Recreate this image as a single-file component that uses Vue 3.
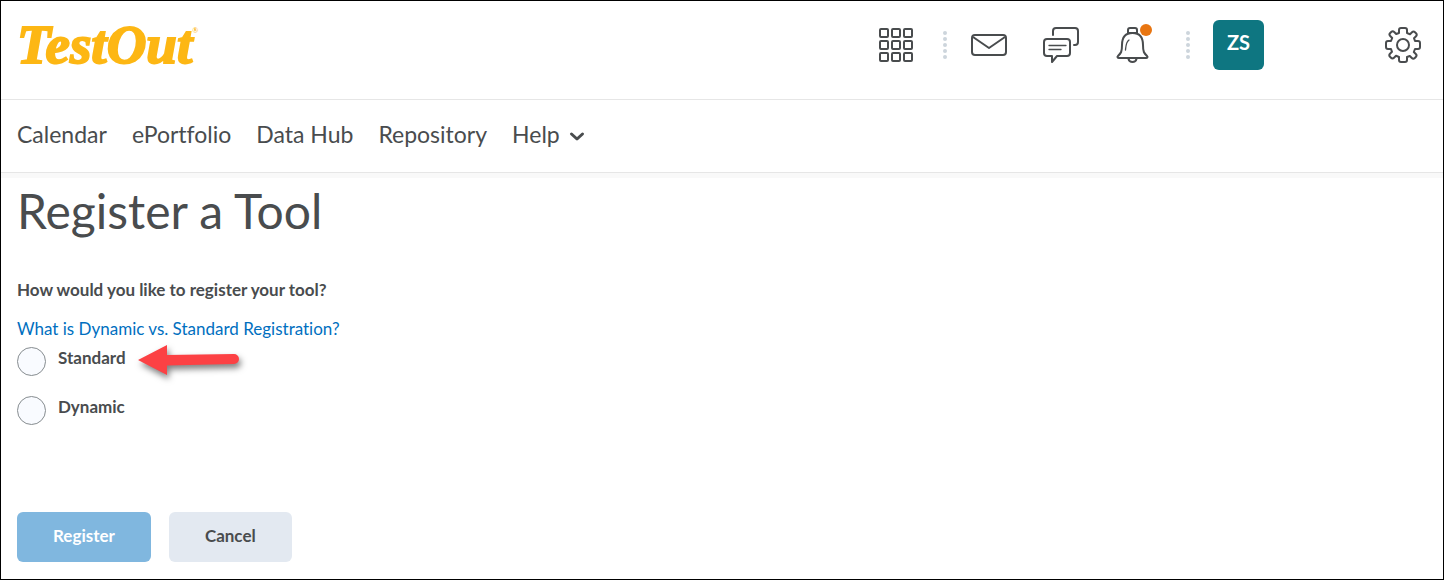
<template>
  <div class="page">
    <header class="topbar">
      <a class="logo" href="#" aria-label="TestOut home">TestOut<sup>®</sup></a>

      <div class="tools">
        <button class="icon-btn" type="button" aria-label="Select a course">
          <svg width="36" height="36" viewBox="0 0 36 36" fill="none" stroke="#494c4e" stroke-width="2">
            <template v-for="y in GRID" :key="y">
              <rect v-for="x in GRID" :key="x" :x="x" :y="y" width="8" height="8" rx="1" />
            </template>
          </svg>
        </button>

        <span class="divider"><i v-for="n in 5" :key="n"></i></span>

        <button class="icon-btn" type="button" aria-label="Message alerts">
          <svg width="36" height="36" viewBox="0 0 36 36" fill="none" stroke="#494c4e" stroke-width="2" stroke-linejoin="round">
            <rect x="1" y="8" width="34" height="20" rx="3" />
            <path d="M2 10l16 11 16-11" />
          </svg>
        </button>

        <button class="icon-btn" type="button" aria-label="Subscription alerts">
          <svg width="36" height="36" viewBox="0 0 36 36" fill="none" stroke="#494c4e" stroke-width="2" stroke-linecap="round" stroke-linejoin="round">
            <path d="M10 8V4a3 3 0 0 1 3-3h19a3 3 0 0 1 3 3v11a3 3 0 0 1-3 3h-1" />
            <path d="M4 12h20a3 3 0 0 1 3 3v11a3 3 0 0 1-3 3H14l-5 6v-6H4a3 3 0 0 1-3-3V15a3 3 0 0 1 3-3z" />
            <path d="M6 18.500h17M6 22.500h12" stroke-width="1.300" />
          </svg>
        </button>

        <button class="icon-btn" type="button" aria-label="Update alerts, new">
          <svg width="36" height="36" viewBox="0 0 36 36" fill="none" stroke="#494c4e" stroke-width="2" stroke-linecap="round" stroke-linejoin="round">
            <path d="M13 6V3a2 2 0 0 1 2-2h5a2 2 0 0 1 2 2v3M13 6h9" />
            <path d="M7 18c0-8 4-12 10.500-12S28 10 28 18c0 7 1 8 4 11 1 1 .5 2-1 2H4c-1.500 0-2-1-1-2 3-3 4-4 4-11z" />
            <path d="M13.500 32c1 4 7 4 8 0" />
            <path d="M14 13c-3 2-3 5-3.500 10" stroke-width="1.300" />
          </svg>
          <span class="badge"></span>
        </button>

        <span class="divider last"><i v-for="n in 5" :key="n"></i></span>

        <button class="avatar" type="button" aria-label="Profile ZS">ZS</button>

        <button class="icon-btn gear" type="button" aria-label="Admin tools">
          <svg width="36" height="36" viewBox="0 0 36 36" fill="none" stroke="#494c4e" stroke-width="2" stroke-linejoin="round">
            <path d="M14 3q0-2 2-2h4q2 0 2 2v3l3 1.200 2-2q1.500-1.500 3 0l1 1q1.500 1.500 0 3l-2 2L30 14h3q2 0 2 2v4q0 2-2 2h-3l-1.200 3 2 2q1.500 1.500 0 3l-1 1q-1.500 1.500-3 0l-2-2L22 30v3q0 2-2 2h-4q-2 0-2-2v-3l-3-1.200-2 2q-1.500 1.500-3 0l-1-1q-1.500-1.500 0-3l2-2L6 22H3q-2 0-2-2v-4q0-2 2-2h3l1.200-3-2-2q-1.500-1.500 0-3l1-1q1.500-1.500 3 0l2 2L14 6z" />
            <circle cx="18" cy="18" r="6" />
          </svg>
        </button>
      </div>
    </header>

    <nav class="navbar">
      <a v-for="item in links" :key="item" href="#">{{ item }}</a>
      <button class="help" type="button" aria-haspopup="true">
        Help
        <svg width="16" height="16" viewBox="0 0 16 16" fill="none" stroke="#494c4e" stroke-width="3" stroke-linecap="round" stroke-linejoin="round">
          <path d="M2.500 8L8 13 13.500 8" />
        </svg>
      </button>
    </nav>

    <main class="content">
      <h1>Register a Tool</h1>

      <form @submit.prevent>
        <p id="question" class="question">How would you like to register your tool?</p>
        <a class="more" href="#">What is Dynamic vs. Standard Registration?</a>

        <div class="options" role="radiogroup" aria-labelledby="question">
          <div v-for="opt in options" :key="opt.value" class="option">
            <input :id="opt.value" v-model="picked" type="radio" name="registration" :value="opt.value" />
            <label :for="opt.value">{{ opt.label }}</label>
            <svg v-if="opt.marked" class="arrow" width="112" height="40" viewBox="0 0 112 40" aria-hidden="true">
              <path d="M3 18L32 3v10L99 12a5 5 0 0 1 0 10L32 23.500V33z" fill="#fc4144" />
            </svg>
          </div>
        </div>

        <div class="actions">
          <button class="btn primary" type="submit">Register</button>
          <button class="btn" type="button">Cancel</button>
        </div>
      </form>
    </main>
  </div>
</template>

<script setup>
import { ref } from 'vue'

// offsets of the 3x3 waffle cells
const GRID = [2, 14, 26]

const links = ['Calendar', 'ePortfolio', 'Data Hub', 'Repository']
const options = [
  { value: 'standard', label: 'Standard', marked: true },
  { value: 'dynamic', label: 'Dynamic' },
]

const picked = ref('')
</script>

<style>
body { margin: 0; }
</style>

<style scoped>
.page {
  box-sizing: border-box;
  min-height: 100vh;
  border: 1px solid #000;
  background: #fff;
  color: #494c4e;
  font-family: Lato, "Liberation Sans", sans-serif;
  font-size: 17px;
  font-variant-ligatures: none;
  line-height: 24px;
}
button {
  font: inherit;
  font-variant-ligatures: none;
  color: inherit;
  border: 0;
  padding: 0;
  background: none;
  cursor: pointer;
}
a {
  color: inherit;
  text-decoration: none;
}
svg { display: block; }

.topbar {
  display: flex;
  align-items: flex-start;
  justify-content: space-between;
  height: 98px;
  padding: 0 22px 0 16px;
  border-bottom: 1px solid #e6e6e6;
}
.logo {
  display: flex;
  align-items: flex-start;
  padding-top: 16px;
  color: #fdb714;
  font-family: "Liberation Serif", serif;
  font-size: 55px;
  font-weight: 700;
  font-style: italic;
  line-height: 56px;
  -webkit-text-stroke: 2px #fdb714;
}
.logo sup {
  padding-top: 10px;
  font-size: 8px;
  line-height: 8px;
  -webkit-text-stroke: 0;
}
.tools {
  display: flex;
  align-items: center;
  padding-top: 19px;
}
.icon-btn {
  position: relative;
  margin-right: 36px;
}
.divider {
  display: flex;
  flex-direction: column;
  gap: 2px;
  margin: 0 24px 0 -7px;
}
.divider.last { margin: 0 23px 0 -1px; }
.divider i {
  width: 4px;
  height: 4px;
  border-radius: 50%;
  background: #cdd5dc;
}
.badge {
  position: absolute;
  top: -3px;
  right: -1px;
  width: 12px;
  height: 12px;
  border-radius: 50%;
  background: #e87511;
}
.avatar {
  width: 51px;
  height: 50px;
  padding-bottom: 6px;
  border-radius: 6px;
  background: #0e7681;
  color: #fff;
  font-size: 20px;
  font-weight: 700;
}
.gear { margin: 0 0 0 121px; }

.navbar {
  box-sizing: border-box;
  display: flex;
  align-items: center;
  gap: 25px;
  height: 73px;
  padding: 0 16px 4px;
  border-bottom: 1px solid #e6e6e6;
  font-size: 23px;
}
.help {
  display: flex;
  align-items: center;
  gap: 9px;
}

.content {
  padding: 0 16px 17px;
  border-top: 5px solid #f9f9f9;
}
h1 {
  margin: 0 0 38px;
  padding-top: 4px;
  font-size: 48px;
  font-weight: 400;
  line-height: 58px;
}
.question {
  margin: 0 0 15px;
  font-weight: 700;
}
.more { color: #006fbf; }
.options {
  display: flex;
  flex-direction: column;
  gap: 20px;
  padding-top: 6px;
}
.option {
  position: relative;
  display: flex;
  align-items: flex-start;
  gap: 12px;
}
.option input {
  appearance: none;
  width: 29px;
  height: 29px;
  margin: 0;
  border: 1px solid #868c8f;
  border-radius: 50%;
  background: #f9fbff;
}
.option input:checked {
  background: radial-gradient(#494c4e 6px, #f9fbff 7px);
}
.option label {
  font-weight: 700;
  line-height: 22px;
}
.arrow {
  position: absolute;
  left: 118px;
  top: -5px;
  filter: drop-shadow(2px 4px 3px rgba(0, 0, 0, 0.5));
}
.actions {
  display: flex;
  gap: 18px;
  padding-top: 87px;
}
.btn {
  height: 50px;
  padding: 0 36px 2px;
  border-radius: 6px;
  background: #e3e9f1;
  font-weight: 700;
}
.btn.primary {
  background: #80b7df;
  color: #fff;
}
</style>
